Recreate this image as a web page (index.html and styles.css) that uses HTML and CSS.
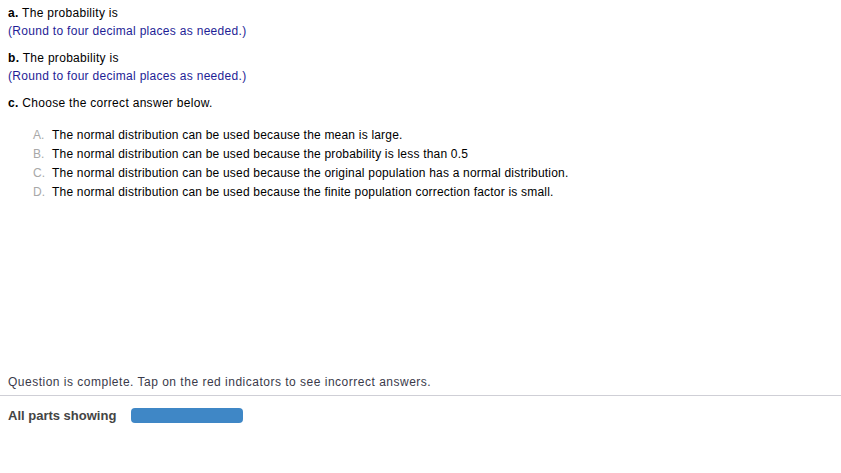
FILE: index.html
```html
<!DOCTYPE html>
<html lang="en">
<head>
    <meta charset="UTF-8">
    <title>Question</title>
    <link rel="stylesheet" href="styles.css">
</head>
<body>
    <div class="question">
        <div class="part">
            <p class="prompt"><b>a.</b> The probability is</p>
            <p class="hint">(Round to four decimal places as needed.)</p>
        </div>
        <div class="part">
            <p class="prompt"><b>b.</b> The probability is</p>
            <p class="hint">(Round to four decimal places as needed.)</p>
        </div>
        <div class="part">
            <p class="prompt"><b>c.</b> Choose the correct answer below.</p>
            <ul class="choices">
                <li><span class="letter">A.</span>The normal distribution can be used because the mean is large.</li>
                <li><span class="letter">B.</span>The normal distribution can be used because the probability is less than 0.5</li>
                <li><span class="letter">C.</span>The normal distribution can be used because the original population has a normal distribution.</li>
                <li><span class="letter">D.</span>The normal distribution can be used because the finite population correction factor is small.</li>
            </ul>
        </div>
    </div>

    <div class="status">Question is complete. Tap on the red indicators to see incorrect answers.</div>

    <div class="footer">
        <span class="parts-label">All parts showing</span>
        <span class="parts-bar"></span>
    </div>
</body>
</html>
```

FILE: styles.css
```css
body {
    margin: 0;
    font-family: "Liberation Sans", Arial, sans-serif;
    font-size: 12px;
    color: #000;
    background: #fff;
}

p {
    margin: 0;
}

/* Question parts */
.question {
    height: 365px;
    padding: 4px 0 0 8px;
    box-sizing: border-box;
}

.part {
    margin-bottom: 9px;
}

.prompt {
    line-height: 18px;
    letter-spacing: 0.3px;
}

.hint {
    line-height: 18px;
    letter-spacing: 0.3px;
    color: #1e1e96;
}

.choices {
    list-style: none;
    margin: 14px 0 0 25px;
    padding: 0;
}

.choices li {
    line-height: 19px;
    letter-spacing: 0.2px;
}

.letter {
    display: inline-block;
    width: 19px;
    letter-spacing: 0;
    color: #a8a8a8;
}

/* Bottom status */
.status {
    padding: 10px 8px 6px;
    font-size: 12px;
    color: #3a3a4a;
    letter-spacing: 0.5px;
    border-bottom: 1px solid #cfcfd6;
}

.footer {
    display: flex;
    align-items: center;
    gap: 15px;
    padding: 12px 8px;
}

.parts-label {
    font-weight: bold;
    font-size: 13px;
    color: #444;
}

.parts-bar {
    width: 112px;
    height: 15px;
    border-radius: 4px;
    background-color: #3f87c6;
}
```
